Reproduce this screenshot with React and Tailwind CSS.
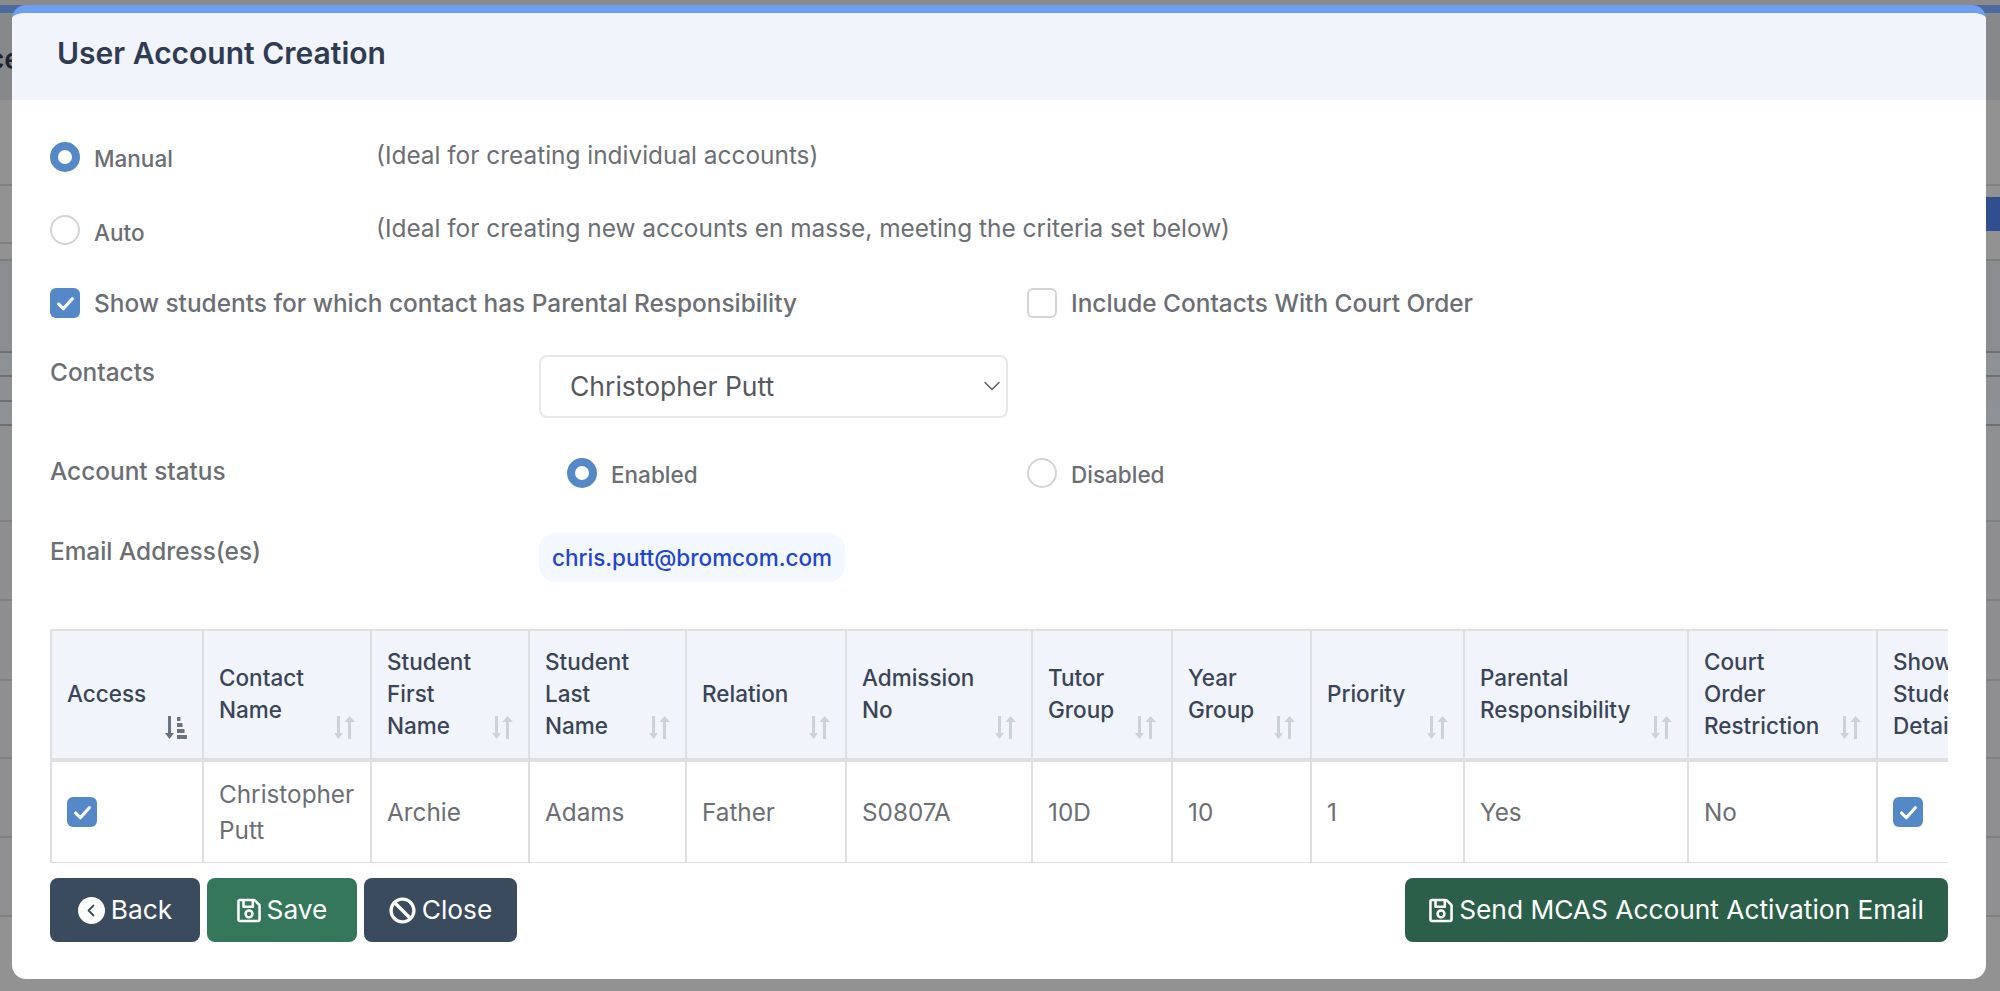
import { ChevronDown } from 'lucide-react';
import { FaRegSave, FaBan } from 'react-icons/fa';

const columns = [
  { key: 'access', title: 'Access', width: 'w-[152px]', active: true },
  { key: 'contact', title: 'Contact Name', width: 'w-[168px]', lines: ['Contact', 'Name'] },
  { key: 'first', title: 'Student First Name', width: 'w-[158px]', lines: ['Student', 'First', 'Name'] },
  { key: 'last', title: 'Student Last Name', width: 'w-[157px]', lines: ['Student', 'Last', 'Name'] },
  { key: 'relation', title: 'Relation', width: 'w-[160px]' },
  { key: 'admission', title: 'Admission No', width: 'w-[186px]', lines: ['Admission', 'No'] },
  { key: 'tutor', title: 'Tutor Group', width: 'w-[140px]', lines: ['Tutor', 'Group'] },
  { key: 'year', title: 'Year Group', width: 'w-[139px]', lines: ['Year', 'Group'] },
  { key: 'priority', title: 'Priority', width: 'w-[153px]' },
  { key: 'parental', title: 'Parental Responsibility', width: 'w-[224px]', lines: ['Parental', 'Responsibility'] },
  { key: 'court', title: 'Court Order Restriction', width: 'w-[189px]', lines: ['Court', 'Order', 'Restriction'] },
  { key: 'show', title: 'Show Student Details', width: 'w-[170px]', lines: ['Show', 'Student', 'Details'], noSort: true },
];

function CheckMark() {
  return (
    <svg viewBox="0 0 20 20" className="w-[21px] h-[21px]" fill="none" stroke="white" strokeWidth="3" strokeLinecap="round" strokeLinejoin="round">
      <path d="M3.500 10.500l4.500 4.500 8.500-9.500" />
    </svg>
  );
}

function BackIcon() {
  return (
    <svg viewBox="0 0 27 27" className="w-[27px] h-[27px]">
      <circle cx="13.500" cy="13.500" r="13.500" fill="white" />
      <path d="M15.500 8.500l-5 5 5 5" fill="none" stroke="#3a4b5e" strokeWidth="1.800" strokeLinecap="round" strokeLinejoin="round" />
    </svg>
  );
}

function Radio({ checked }) {
  if (checked) {
    return <span className="block w-[30px] h-[30px] shrink-0 rounded-full border-[8px] border-[#5488c7] bg-white" />;
  }
  return <span className="block w-[30px] h-[30px] shrink-0 rounded-full border-2 border-[#d4d4d4] bg-white" />;
}

function Checkbox({ checked }) {
  if (checked) {
    return (
      <span className="flex items-center justify-center w-[30px] h-[30px] shrink-0 rounded-[6px] bg-[#5488c7]">
        <CheckMark />
      </span>
    );
  }
  return <span className="block w-[30px] h-[30px] shrink-0 rounded-[6px] border-2 border-[#d4d4d4] bg-white" />;
}

function SortIcon({ active }) {
  if (active) {
    return (
      <svg viewBox="0 0 22 23" className="w-[22px] h-[23px]" fill="#6b7280">
        <path d="M3 0h3v17h3l-4.500 6L0 17h3z" />
        <rect x="12" y="1" width="3.500" height="4" />
        <rect x="12" y="7" width="5.500" height="4" />
        <rect x="12" y="13" width="7.500" height="4" />
        <rect x="12" y="19" width="10" height="4" />
      </svg>
    );
  }
  return (
    <svg viewBox="0 0 21 23" className="w-[21px] h-[23px]" fill="#ccd2da">
      <path d="M3 0h3v17h3l-4.500 6L0 17h3z" />
      <path d="M14 23h3V6h4L15.500 0 10.500 6H14z" />
    </svg>
  );
}

function Button({ icon, label, color, width }) {
  return (
    <button className={`flex items-center justify-center gap-[6px] h-[64px] rounded-[8px] text-white text-[26.300px] ${color} ${width}`}>
      {icon}
      {label}
    </button>
  );
}

// what shows of the page behind the dialog
function PageBehind() {
  return (
    <div className="flex flex-col h-[991px] overflow-hidden bg-[#929292]">
      <div className="h-[5px] bg-[#8b8b8b]" />
      <div className="h-[8px] bg-[#4c6a9e]" />
      <div className="h-[87px] bg-[#87888a] flex items-center overflow-hidden">
        <span className="ml-[-12px] text-[28px] font-semibold text-[#1d2430] mt-[4px]">ce</span>
      </div>
      <div className="h-[86px] border-b-2 border-[#808080]" />
      <div className="h-[58px] flex justify-between">
        <div className="w-[12px] border-b-2 border-[#808080]" />
        <div className="w-[14px] h-[34px] mt-[11px] bg-[#2f4f90]" />
      </div>
      <div className="h-[17px] border-b-2 border-[#7e7e7e]" />
      <div className="h-[92px] bg-[#8b8c90] border-b-2 border-[#6f6f6f]" />
      <div className="h-[24px] bg-[#8c9295] border-b-2 border-[#6f6f6f]" />
      <div className="h-[25px] flex bg-[#8d8f92]">
        <div className="w-[12px] border-b-2 border-[#6f6f6f]" />
      </div>
      <div className="h-[24px] bg-[#8c9295] border-b-2 border-[#6f6f6f]" />
      <div className="h-[96px] bg-[#8f9092] border-b-2 border-[#808080]" />
      <div className="h-[79px] bg-[#8e8e90] border-b-2 border-[#808080]" />
      <div className="h-[80px] bg-[#8e8e90] border-b-2 border-[#808080]" />
      <div className="h-[78px] bg-[#8f8f91] border-b-2 border-[#808080]" />
      <div className="h-[79px] bg-[#8f8f91] border-b-2 border-[#808080]" />
      <div className="h-[79px] bg-[#909092] border-b-2 border-[#808080]" />
    </div>
  );
}

export default function App() {
  return (
    <div className="relative w-[2000px] h-[991px] overflow-hidden font-['Inter',sans-serif]">
      <PageBehind />

      <div className="absolute left-[12px] top-[5px] w-[1974px] h-[974px] flex flex-col bg-white rounded-[14px] border-t-[8px] border-[#6f9ff0] overflow-hidden">
        <div className="h-[87px] shrink-0 flex items-center pl-[45px] bg-[#f1f4fa]">
          <h2 className="mt-[-6px] text-[30px] font-semibold text-[#2f3b52]">User Account Creation</h2>
        </div>

        <div className="flex-1 flex flex-col px-[38px]">
          {/* mode */}
          <div className="flex items-center h-[30px] mt-[42px]">
            <div className="flex items-center w-[326px]">
              <Radio checked />
              <span className="ml-[14px] mt-[4px] text-[22.500px] font-medium text-[#6b6e73]">Manual</span>
            </div>
            <span className="mt-[-4px] text-[24.400px] text-[#6b6e73]">(Ideal for creating individual accounts)</span>
          </div>
          <div className="flex items-center h-[30px] mt-[43px]">
            <div className="flex items-center w-[326px]">
              <Radio />
              <span className="ml-[14px] mt-[5px] text-[22.500px] font-medium text-[#6b6e73]">Auto</span>
            </div>
            <span className="mt-[-4px] text-[24.400px] text-[#6b6e73]">(Ideal for creating new accounts en masse, meeting the criteria set below)</span>
          </div>

          {/* filters */}
          <div className="flex items-center h-[30px] mt-[43px]">
            <div className="flex items-center w-[977px]">
              <Checkbox checked />
              <span className="ml-[14px] text-[24.400px] font-medium text-[#6b6e73]">Show students for which contact has Parental Responsibility</span>
            </div>
            <Checkbox />
            <span className="ml-[14px] text-[24.400px] font-medium text-[#6b6e73]">Include Contacts With Court Order</span>
          </div>

          {/* contacts */}
          <div className="flex items-start h-[63px] mt-[37px]">
            <span className="w-[489px] mt-[-1px] text-[24.400px] font-medium text-[#6b6e73]">Contacts</span>
            <div className="relative w-[469px] h-[63px]">
              <select className="w-full h-full pl-[29px] appearance-none bg-white border-2 border-[#e8e8e8] rounded-[8px] text-[26.500px] text-[#55585d]">
                <option>Christopher Putt</option>
              </select>
              <ChevronDown className="absolute right-[2px] top-[17px] w-[28px] h-[28px] text-[#55585d]" strokeWidth={1.2} />
            </div>
          </div>

          {/* status */}
          <div className="flex items-center h-[30px] mt-[40px]">
            <span className="w-[517px] mt-[-4px] text-[24.400px] font-medium text-[#6b6e73]">Account status</span>
            <div className="flex items-center w-[460px]">
              <Radio checked />
              <span className="ml-[14px] mt-[4px] text-[22.500px] font-medium text-[#6b6e73]">Enabled</span>
            </div>
            <Radio />
            <span className="ml-[14px] mt-[4px] text-[22.500px] font-medium text-[#6b6e73]">Disabled</span>
          </div>

          {/* email */}
          <div className="flex items-start h-[49px] mt-[45px]">
            <span className="w-[489px] text-[24.400px] font-medium text-[#6b6e73]">Email Address(es)</span>
            <span className="flex items-center h-[49px] px-[13px] rounded-[16px] bg-[#f3f8ff] text-[22.500px] font-medium text-[#1f45d1]">chris.putt@bromcom.com</span>
          </div>

          {/* students table */}
          <div className="w-[1898px] h-[234px] mt-[47px] overflow-hidden shrink-0">
            <table className="table-fixed border-collapse w-[1996px]">
              <colgroup>
                {columns.map((c) => (
                  <col key={c.key} className={c.width} />
                ))}
              </colgroup>
              <thead>
                <tr className="h-[130px] bg-[#f1f4fa]">
                  {columns.map((c) => (
                    <th key={c.key} className="relative pl-[15px] pr-[15px] pb-[2px] text-left align-middle font-medium text-[22.500px] leading-[32px] text-[#3a4458] border-2 border-b-[4px] border-[#dedfe1]">
                      {c.lines ? c.lines.map((l) => <div key={l}>{l}</div>) : c.title}
                      {!c.noSort && (
                        <span className="absolute right-[15px] bottom-[19px]">
                          <SortIcon active={c.active} />
                        </span>
                      )}
                    </th>
                  ))}
                </tr>
              </thead>
              <tbody>
                <tr className="h-[103px] text-[24.300px] text-[#6b6e73]">
                  <td className="pl-[15px] border-2 border-[#dedfe1]"><Checkbox checked /></td>
                  <td className="pl-[15px] leading-[36px] border-2 border-[#dedfe1]">Christopher<br />Putt</td>
                  <td className="pl-[15px] border-2 border-[#dedfe1]">Archie</td>
                  <td className="pl-[15px] border-2 border-[#dedfe1]">Adams</td>
                  <td className="pl-[15px] border-2 border-[#dedfe1]">Father</td>
                  <td className="pl-[15px] border-2 border-[#dedfe1]">S0807A</td>
                  <td className="pl-[15px] border-2 border-[#dedfe1]">10D</td>
                  <td className="pl-[15px] border-2 border-[#dedfe1]">10</td>
                  <td className="pl-[15px] border-2 border-[#dedfe1]">1</td>
                  <td className="pl-[15px] border-2 border-[#dedfe1]">Yes</td>
                  <td className="pl-[15px] border-2 border-[#dedfe1]">No</td>
                  <td className="pl-[15px] border-2 border-[#dedfe1]"><Checkbox checked /></td>
                </tr>
              </tbody>
            </table>
          </div>

          {/* actions */}
          <div className="flex items-center justify-between mt-[15px]">
            <div className="flex gap-[7px]">
              <Button icon={<BackIcon />} label="Back" color="bg-[#3a4b5e]" width="w-[150px]" />
              <Button icon={<FaRegSave className="w-[24px] h-[27px]" />} label="Save" color="bg-[#35775a]" width="w-[150px]" />
              <Button icon={<FaBan className="w-[27px] h-[27px]" />} label="Close" color="bg-[#3a4b5e]" width="w-[153px]" />
            </div>
            <Button icon={<FaRegSave className="w-[24px] h-[27px]" />} label="Send MCAS Account Activation Email" color="bg-[#2b5f49]" width="w-[543px]" />
          </div>
        </div>
      </div>
    </div>
  );
}
